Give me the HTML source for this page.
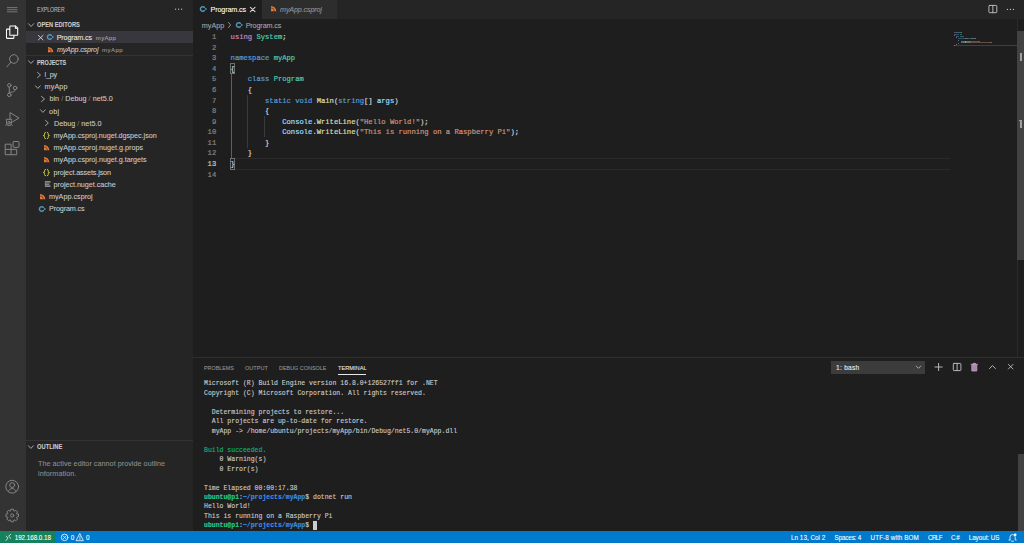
<!DOCTYPE html>
<html><head><meta charset="utf-8">
<style>
*{box-sizing:border-box;margin:0;padding:0}
html,body{width:1024px;height:543px;overflow:hidden;background:#1e1e1e}
body{position:relative;font-family:"Liberation Sans",sans-serif;color:#cccccc}
.a{position:absolute}
.t{position:absolute;white-space:pre;-webkit-text-stroke-width:0.08px}
.m{-webkit-text-stroke-width:0.2px}
</style></head><body>
<div class="a" style="left:0.00px;top:0.00px;width:26.00px;height:531.00px;background:#333333;"></div>
<div class="a" style="left:26.00px;top:0.00px;width:167.00px;height:531.00px;background:#252526;"></div>
<div class="a" style="left:193.00px;top:0.00px;width:831.00px;height:19.00px;background:#252526;"></div>
<div class="a" style="left:193.00px;top:0.00px;width:68.70px;height:19.00px;background:#1e1e1e;"></div>
<div class="a" style="left:261.70px;top:0.00px;width:75.50px;height:19.00px;background:#2d2d2d;"></div>
<svg class="a" style="left:0;top:0" width="26" height="531" viewBox="0 0 26 531" fill="none" stroke-linecap="round" stroke-linejoin="round">
<g stroke="#7f7f7f" stroke-width="0.9"><path d="M7.4 7.6H17M7.4 9.7H17M7.4 11.8H17"/></g>
<g stroke="#ffffff" stroke-width="1.05">
<path d="M9.8 35.3V26.6a0.6 0.6 0 0 1 0.6-0.6H15.6L17.7 28.1V34.7a0.6 0.6 0 0 1-0.6 0.6H10.4a0.6 0.6 0 0 1-0.6-0.6Z"/>
<path d="M15.4 26V28.3H17.7"/>
<path d="M9.8 29.1H7.1a0.6 0.6 0 0 0-0.6 0.6V37.8a0.6 0.6 0 0 0 0.6 0.6H13.3a0.6 0.6 0 0 0 0.6-0.6V35.3"/>
</g>
<g stroke="#858585" stroke-width="1">
<circle cx="13.9" cy="59" r="4.3"/><path d="M10.8 62.2L6.9 66.9"/>
<circle cx="9.3" cy="85.3" r="1.75"/><circle cx="15.1" cy="88" r="1.75"/><circle cx="9.3" cy="94.9" r="1.75"/>
<path d="M9.3 87.05V93.15M15.1 89.75C15.1 91.7 13.2 92.1 9.3 92.4"/>
<path d="M10 118.6V112.6L19 118L12.6 121.8"/>
<path d="M6.2 119.3H11.8M6.6 120.6V123.2A2.4 2.4 0 0 0 11.4 123.2V120.6"/><circle cx="9" cy="122.6" r="1.2"/><path d="M5.6 125.4L6.9 124.4M12.4 125.4L11.1 124.4" stroke-width="0.8"/>
<path d="M5.6 144.2H11.1V154.7H5.6ZM5.6 149.4H16.7V154.7H11.1"/>
<rect x="13.1" y="141.5" width="5.9" height="5.9" rx="0.9"/>
<circle cx="12.2" cy="486.7" r="6.4"/><circle cx="12.2" cy="485.1" r="2.45"/><path d="M8.4 491.6C9.3 489.5 10.7 488.5 12.2 488.5C13.7 488.5 15.1 489.5 16 491.6"/>
<path d="M18.48 514.29 L18.48 516.71 L16.60 517.16 L16.48 517.44 L17.50 519.09 L15.79 520.80 L14.14 519.78 L13.86 519.90 L13.41 521.78 L10.99 521.78 L10.54 519.90 L10.26 519.78 L8.61 520.80 L6.90 519.09 L7.92 517.44 L7.80 517.16 L5.92 516.71 L5.92 514.29 L7.80 513.84 L7.92 513.56 L6.90 511.91 L8.61 510.20 L10.26 511.22 L10.54 511.10 L10.99 509.22 L13.41 509.22 L13.86 511.10 L14.14 511.22 L15.79 510.20 L17.50 511.91 L16.48 513.56 L16.60 513.84Z"/>
<circle cx="12.2" cy="515.5" r="1.6"/>
</g>
</svg>
<div class="t" style="left:36.90px;top:4px;font-family:'Liberation Sans';font-size:6.3px;line-height:12px;font-weight:normal;font-style:normal;color:#bbbbbb;transform-origin:0 0;transform:scaleX(0.8048);">EXPLORER</div>
<svg class="a" style="left:174.00px;top:7.00px;" width="10.00" height="4.00" viewBox="174.00 7.00 10.00 4.00" fill="none" stroke-linecap="round" stroke-linejoin="round"><circle cx="175.6" cy="9.2" r="0.65" fill="#c5c5c5"/><circle cx="178.6" cy="9.2" r="0.65" fill="#c5c5c5"/><circle cx="181.6" cy="9.2" r="0.65" fill="#c5c5c5"/></svg>
<svg class="a" style="left:27.00px;top:21.00px;" width="8.20" height="8.00" viewBox="27.00 21.00 8.20 8.00" fill="none" stroke-linecap="round" stroke-linejoin="round"><path d="M28.50 23.71L31.10 26.50L33.70 23.71" stroke="#c5c5c5" stroke-width="0.8"/></svg>
<div class="t" style="left:36.90px;top:19px;font-family:'Liberation Sans';font-size:6.4px;line-height:12px;font-weight:bold;font-style:normal;color:#cccccc;transform-origin:0 0;transform:scaleX(0.8884);">OPEN EDITORS</div>
<div class="a" style="left:26.00px;top:31.10px;width:167.00px;height:12.20px;background:#37373d;"></div>
<svg class="a" style="left:36.60px;top:33.60px;" width="7.40" height="7.30" viewBox="36.60 33.60 7.40 7.30" fill="none" stroke-linecap="round" stroke-linejoin="round"><path d="M38.00 35.00L42.60 39.50M42.60 35.00L38.00 39.50" stroke="#d0d0d0" stroke-width="1.0"/></svg>
<svg class="a" style="left:45.80px;top:33.20px;" width="8.40" height="8.40" viewBox="45.80 33.20 8.40 8.40" fill="none" stroke-linecap="round" stroke-linejoin="round"><path d="M51.54 36.05A2.30 2.30 0 1 0 51.54 38.35" stroke="#519aba" stroke-width="1.45" stroke-linecap="butt"/><path d="M51.70 37.20H53.50M52.60 36.20V38.20" stroke="#519aba" stroke-width="0.9" stroke-linecap="butt"/></svg>
<div class="t" style="left:56.70px;top:32px;font-family:'Liberation Sans';font-size:7.2px;line-height:12px;font-weight:normal;font-style:normal;color:#e8e8e8;letter-spacing:-0.161px;">Program.cs</div>
<div class="t" style="left:95.80px;top:32px;font-family:'Liberation Sans';font-size:6.0px;line-height:12px;font-weight:normal;font-style:normal;color:#a6a6a6;letter-spacing:0.332px;">myApp</div>
<svg class="a" style="left:46.70px;top:45.70px;" width="7.30" height="7.30" viewBox="46.70 45.70 7.30 7.30" fill="none" stroke-linecap="round" stroke-linejoin="round"><path d="M47.70 52.00V46.70A5.30 5.30 0 0 1 53.00 52.00Z" fill="#e37933"/><path d="M47.70 48.61A3.39 3.39 0 0 1 51.09 52.00" stroke="#252526" stroke-width="0.55" stroke-linecap="butt"/></svg>
<div class="t" style="left:56.90px;top:44px;font-family:'Liberation Sans';font-size:7.2px;line-height:12px;font-weight:normal;font-style:italic;color:#cccccc;letter-spacing:-0.176px;">myApp.csproj</div>
<div class="t" style="left:102.00px;top:44px;font-family:'Liberation Sans';font-size:6.0px;line-height:12px;font-weight:normal;font-style:normal;color:#9d9d9d;letter-spacing:0.482px;">myApp</div>
<div class="a" style="left:26.00px;top:55.00px;width:167.00px;height:1.00px;background:#333333;"></div>
<svg class="a" style="left:27.00px;top:58.40px;" width="8.00" height="8.00" viewBox="27.00 58.40 8.00 8.00" fill="none" stroke-linecap="round" stroke-linejoin="round"><path d="M28.50 61.15L31.00 63.85L33.50 61.15" stroke="#c5c5c5" stroke-width="0.8"/></svg>
<div class="t" style="left:36.80px;top:57px;font-family:'Liberation Sans';font-size:6.4px;line-height:12px;font-weight:bold;font-style:normal;color:#cccccc;transform-origin:0 0;transform:scaleX(0.8477);">PROJECTS</div>
<svg class="a" style="left:35.70px;top:69.60px;" width="5.90" height="10.00" viewBox="35.70 69.60 5.90 10.00" fill="none" stroke-linecap="round" stroke-linejoin="round"><path d="M37.20 72.00L40.20 74.60L37.20 77.20" stroke="#c5c5c5" stroke-width="0.8"/></svg>
<div class="t" style="left:44.60px;top:69px;font-family:'Liberation Sans';font-size:7.2px;line-height:12px;font-weight:normal;font-style:normal;color:#cccccc;letter-spacing:-0.228px;">l_py</div>
<svg class="a" style="left:34.30px;top:82.80px;" width="7.70" height="8.00" viewBox="34.30 82.80 7.70 8.00" fill="none" stroke-linecap="round" stroke-linejoin="round"><path d="M35.80 85.62L38.15 88.18L40.50 85.62" stroke="#c5c5c5" stroke-width="0.8"/></svg>
<div class="t" style="left:44.60px;top:81px;font-family:'Liberation Sans';font-size:7.2px;line-height:12px;font-weight:normal;font-style:normal;color:#cccccc;letter-spacing:0.108px;">myApp</div>
<svg class="a" style="left:40.10px;top:94.00px;" width="5.90" height="10.00" viewBox="40.10 94.00 5.90 10.00" fill="none" stroke-linecap="round" stroke-linejoin="round"><path d="M41.60 96.40L44.60 99.00L41.60 101.60" stroke="#c5c5c5" stroke-width="0.8"/></svg>
<div class="t" style="left:49.40px;top:93px;font-family:'Liberation Sans';font-size:7.2px;line-height:12px;font-weight:normal;font-style:normal;color:#cccccc;letter-spacing:0.035px;">bin <span style="color:#7a7a7a">/</span> Debug <span style="color:#7a7a7a">/</span> net5.0</div>
<svg class="a" style="left:39.20px;top:107.20px;" width="7.80" height="8.00" viewBox="39.20 107.20 7.80 8.00" fill="none" stroke-linecap="round" stroke-linejoin="round"><path d="M40.70 109.99L43.10 112.60L45.50 109.99" stroke="#c5c5c5" stroke-width="0.8"/></svg>
<div class="t" style="left:49.00px;top:106px;font-family:'Liberation Sans';font-size:7.2px;line-height:12px;font-weight:normal;font-style:normal;color:#cccccc;letter-spacing:0.304px;">obj</div>
<svg class="a" style="left:44.30px;top:118.40px;" width="5.70" height="10.00" viewBox="44.30 118.40 5.70 10.00" fill="none" stroke-linecap="round" stroke-linejoin="round"><path d="M45.80 120.80L48.60 123.40L45.80 126.00" stroke="#c5c5c5" stroke-width="0.8"/></svg>
<div class="t" style="left:54.00px;top:118px;font-family:'Liberation Sans';font-size:7.2px;line-height:12px;font-weight:normal;font-style:normal;color:#cccccc;letter-spacing:0.019px;">Debug <span style="color:#7a7a7a">/</span> net5.0</div>
<svg class="a" style="left:42.40px;top:130.90px;" width="8.80" height="9.20" viewBox="42.40 130.90 8.80 9.20" fill="none" stroke-linecap="round" stroke-linejoin="round"><path d="M45.90 132.40Q44.90 132.40 44.90 133.50L44.90 134.80Q44.90 135.50 43.70 135.50Q44.90 135.50 44.90 136.20L44.90 137.50Q44.90 138.60 45.90 138.60 M47.70 132.40Q48.70 132.40 48.70 133.50L48.70 134.80Q48.70 135.50 49.90 135.50Q48.70 135.50 48.70 136.20L48.70 137.50Q48.70 138.60 47.70 138.60" stroke="#cbcb41" stroke-width="1"/></svg>
<div class="t" style="left:53.60px;top:130px;font-family:'Liberation Sans';font-size:7.2px;line-height:12px;font-weight:normal;font-style:normal;color:#cccccc;letter-spacing:-0.027px;">myApp.csproj.nuget.dgspec.json</div>
<svg class="a" style="left:43.40px;top:143.90px;" width="7.30" height="7.30" viewBox="43.40 143.90 7.30 7.30" fill="none" stroke-linecap="round" stroke-linejoin="round"><path d="M44.40 150.20V144.90A5.30 5.30 0 0 1 49.70 150.20Z" fill="#e37933"/><path d="M44.40 146.81A3.39 3.39 0 0 1 47.79 150.20" stroke="#252526" stroke-width="0.55" stroke-linecap="butt"/></svg>
<div class="t" style="left:53.60px;top:142px;font-family:'Liberation Sans';font-size:7.2px;line-height:12px;font-weight:normal;font-style:normal;color:#cccccc;letter-spacing:-0.004px;">myApp.csproj.nuget.g.props</div>
<svg class="a" style="left:43.40px;top:156.10px;" width="7.30" height="7.30" viewBox="43.40 156.10 7.30 7.30" fill="none" stroke-linecap="round" stroke-linejoin="round"><path d="M44.40 162.40V157.10A5.30 5.30 0 0 1 49.70 162.40Z" fill="#e37933"/><path d="M44.40 159.01A3.39 3.39 0 0 1 47.79 162.40" stroke="#252526" stroke-width="0.55" stroke-linecap="butt"/></svg>
<div class="t" style="left:53.60px;top:154px;font-family:'Liberation Sans';font-size:7.2px;line-height:12px;font-weight:normal;font-style:normal;color:#cccccc;letter-spacing:-0.018px;">myApp.csproj.nuget.g.targets</div>
<svg class="a" style="left:42.40px;top:167.50px;" width="8.80" height="9.20" viewBox="42.40 167.50 8.80 9.20" fill="none" stroke-linecap="round" stroke-linejoin="round"><path d="M45.90 169.00Q44.90 169.00 44.90 170.10L44.90 171.40Q44.90 172.10 43.70 172.10Q44.90 172.10 44.90 172.80L44.90 174.10Q44.90 175.20 45.90 175.20 M47.70 169.00Q48.70 169.00 48.70 170.10L48.70 171.40Q48.70 172.10 49.90 172.10Q48.70 172.10 48.70 172.80L48.70 174.10Q48.70 175.20 47.70 175.20" stroke="#cbcb41" stroke-width="1"/></svg>
<div class="t" style="left:53.60px;top:167px;font-family:'Liberation Sans';font-size:7.2px;line-height:12px;font-weight:normal;font-style:normal;color:#cccccc;letter-spacing:-0.118px;">project.assets.json</div>
<svg class="a" style="left:44.00px;top:180.40px;" width="8.00" height="8.00" viewBox="44.00 180.40 8.00 8.00" fill="none" stroke-linecap="round" stroke-linejoin="round"><path d="M45.00 182.30H50.60M45.00 184.45H49.40M45.00 186.60H50.60" stroke="#a8a8a8" stroke-width="1.3" stroke-linecap="butt"/><path d="M45.30 181.70V187.20" stroke="#6a9fb5" stroke-width="0.6" stroke-linecap="butt"/></svg>
<div class="t" style="left:53.60px;top:179px;font-family:'Liberation Sans';font-size:7.2px;line-height:12px;font-weight:normal;font-style:normal;color:#cccccc;letter-spacing:-0.035px;">project.nuget.cache</div>
<svg class="a" style="left:39.20px;top:192.70px;" width="7.30" height="7.30" viewBox="39.20 192.70 7.30 7.30" fill="none" stroke-linecap="round" stroke-linejoin="round"><path d="M40.20 199.00V193.70A5.30 5.30 0 0 1 45.50 199.00Z" fill="#e37933"/><path d="M40.20 195.61A3.39 3.39 0 0 1 43.59 199.00" stroke="#252526" stroke-width="0.55" stroke-linecap="butt"/></svg>
<div class="t" style="left:49.00px;top:191px;font-family:'Liberation Sans';font-size:7.2px;line-height:12px;font-weight:normal;font-style:normal;color:#cccccc;letter-spacing:0.015px;">myApp.csproj</div>
<svg class="a" style="left:37.90px;top:204.70px;" width="8.40" height="8.40" viewBox="37.90 204.70 8.40 8.40" fill="none" stroke-linecap="round" stroke-linejoin="round"><path d="M43.64 207.55A2.30 2.30 0 1 0 43.64 209.85" stroke="#519aba" stroke-width="1.45" stroke-linecap="butt"/><path d="M43.80 208.70H45.60M44.70 207.70V209.70" stroke="#519aba" stroke-width="0.9" stroke-linecap="butt"/></svg>
<div class="t" style="left:49.00px;top:203px;font-family:'Liberation Sans';font-size:7.2px;line-height:12px;font-weight:normal;font-style:normal;color:#cccccc;letter-spacing:-0.127px;">Program.cs</div>
<div class="a" style="left:26.00px;top:440.00px;width:167.00px;height:1.00px;background:#333333;"></div>
<svg class="a" style="left:27.20px;top:442.80px;" width="7.80" height="8.00" viewBox="27.20 442.80 7.80 8.00" fill="none" stroke-linecap="round" stroke-linejoin="round"><path d="M28.70 445.60L31.10 448.21L33.50 445.60" stroke="#c5c5c5" stroke-width="0.8"/></svg>
<div class="t" style="left:37.00px;top:441px;font-family:'Liberation Sans';font-size:6.4px;line-height:12px;font-weight:bold;font-style:normal;color:#cccccc;transform-origin:0 0;transform:scaleX(0.9021);">OUTLINE</div>
<div class="t" style="left:38.00px;top:458px;font-family:'Liberation Sans';font-size:7.2px;line-height:12px;font-weight:normal;font-style:normal;color:#8e8e8e;letter-spacing:0.040px;">The active editor cannot provide outline</div>
<div class="t" style="left:38.00px;top:468px;font-family:'Liberation Sans';font-size:7.2px;line-height:12px;font-weight:normal;font-style:normal;color:#8e8e8e;letter-spacing:0.068px;">information.</div>
<svg class="a" style="left:199.40px;top:5.00px;" width="8.40" height="8.40" viewBox="199.40 5.00 8.40 8.40" fill="none" stroke-linecap="round" stroke-linejoin="round"><path d="M205.14 7.85A2.30 2.30 0 1 0 205.14 10.15" stroke="#519aba" stroke-width="1.45" stroke-linecap="butt"/><path d="M205.30 9.00H207.10M206.20 8.00V10.00" stroke="#519aba" stroke-width="0.9" stroke-linecap="butt"/></svg>
<div class="t" style="left:210.60px;top:4px;font-family:'Liberation Sans';font-size:7.2px;line-height:12px;font-weight:normal;font-style:normal;color:#ffffff;letter-spacing:-0.138px;">Program.cs</div>
<svg class="a" style="left:249.10px;top:6.10px;" width="7.40" height="7.00" viewBox="249.10 6.10 7.40 7.00" fill="none" stroke-linecap="round" stroke-linejoin="round"><path d="M250.50 7.50L255.10 11.70M255.10 7.50L250.50 11.70" stroke="#d8d8d8" stroke-width="1.05"/></svg>
<svg class="a" style="left:269.70px;top:5.10px;" width="7.30" height="7.30" viewBox="269.70 5.10 7.30 7.30" fill="none" stroke-linecap="round" stroke-linejoin="round"><path d="M270.70 11.40V6.10A5.30 5.30 0 0 1 276.00 11.40Z" fill="#e37933"/><path d="M270.70 8.01A3.39 3.39 0 0 1 274.09 11.40" stroke="#252526" stroke-width="0.55" stroke-linecap="butt"/></svg>
<div class="t" style="left:280.10px;top:4px;font-family:'Liberation Sans';font-size:7.2px;line-height:12px;font-weight:normal;font-style:italic;color:#969696;letter-spacing:-0.158px;">myApp.csproj</div>
<svg class="a" style="left:987.00px;top:4.00px;" width="12.00" height="10.00" viewBox="987.00 4.00 12.00 10.00" fill="none" stroke-linecap="round" stroke-linejoin="round"><rect x="988.9" y="5.4" width="7.9" height="7.3" rx="0.8" stroke="#c5c5c5" stroke-width="0.9"/><path d="M992.85 5.4V12.7" stroke="#c5c5c5" stroke-width="0.9"/></svg>
<svg class="a" style="left:1005.00px;top:7.00px;" width="11.00" height="4.00" viewBox="1005.00 7.00 11.00 4.00" fill="none" stroke-linecap="round" stroke-linejoin="round"><circle cx="1007.4" cy="9.4" r="0.65" fill="#c5c5c5"/><circle cx="1010.4" cy="9.4" r="0.65" fill="#c5c5c5"/><circle cx="1013.4" cy="9.4" r="0.65" fill="#c5c5c5"/></svg>
<div class="t" style="left:201.80px;top:20px;font-family:'Liberation Sans';font-size:7.2px;line-height:12px;font-weight:normal;font-style:normal;color:#a9a9a9;letter-spacing:0.008px;">myApp</div>
<svg class="a" style="left:226.70px;top:20.30px;" width="5.00" height="10.00" viewBox="226.70 20.30 5.00 10.00" fill="none" stroke-linecap="round" stroke-linejoin="round"><path d="M228.20 22.70L230.30 25.30L228.20 27.90" stroke="#a9a9a9" stroke-width="0.8"/></svg>
<svg class="a" style="left:234.60px;top:21.20px;" width="8.40" height="8.40" viewBox="234.60 21.20 8.40 8.40" fill="none" stroke-linecap="round" stroke-linejoin="round"><path d="M240.34 24.05A2.30 2.30 0 1 0 240.34 26.35" stroke="#519aba" stroke-width="1.45" stroke-linecap="butt"/><path d="M240.50 25.20H242.30M241.40 24.20V26.20" stroke="#519aba" stroke-width="0.9" stroke-linecap="butt"/></svg>
<div class="t" style="left:245.70px;top:20px;font-family:'Liberation Sans';font-size:7.2px;line-height:12px;font-weight:normal;font-style:normal;color:#a9a9a9;letter-spacing:-0.127px;">Program.cs</div>
<div class="a" style="left:230.00px;top:158.38px;width:719.50px;height:11.19px;background:transparent;border-top:1px solid #2a2a2a;border-bottom:1px solid #2a2a2a;"></div>
<div class="a" style="left:230.50px;top:73.86px;width:0.90px;height:84.42px;background:#5f5f5f;"></div>
<div class="a" style="left:247.40px;top:95.04px;width:0.90px;height:52.95px;background:#3a3a3a;"></div>
<div class="a" style="left:264.30px;top:116.22px;width:0.90px;height:21.18px;background:#3a3a3a;"></div>
<div class="a" style="left:230.20px;top:63.37px;width:5.00px;height:10.59px;background:transparent;border:1px solid #6e6e6e;"></div>
<div class="a" style="left:230.20px;top:158.38px;width:5.00px;height:11.19px;background:transparent;border:1px solid #6e6e6e;"></div>
<div class="t m" style="left:211.89px;top:32px;font-family:'Liberation Mono';font-size:7.18px;line-height:10.59px;font-weight:normal;font-style:normal;color:#858585;">1</div>
<div class="t m" style="left:230.60px;top:32px;font-family:'Liberation Mono';font-size:7.18px;line-height:10.59px;font-weight:normal;font-style:normal;color:#d4d4d4;"><span style="color:#c586c0">using</span><span style="color:#d4d4d4"> </span><span style="color:#4ec9b0">System</span><span style="color:#d4d4d4">;</span></div>
<div class="t m" style="left:211.89px;top:43px;font-family:'Liberation Mono';font-size:7.18px;line-height:10.59px;font-weight:normal;font-style:normal;color:#858585;">2</div>
<div class="t m" style="left:211.89px;top:53px;font-family:'Liberation Mono';font-size:7.18px;line-height:10.59px;font-weight:normal;font-style:normal;color:#858585;">3</div>
<div class="t m" style="left:230.60px;top:53px;font-family:'Liberation Mono';font-size:7.18px;line-height:10.59px;font-weight:normal;font-style:normal;color:#d4d4d4;"><span style="color:#569cd6">namespace</span><span style="color:#d4d4d4"> </span><span style="color:#4ec9b0">myApp</span></div>
<div class="t m" style="left:211.89px;top:64px;font-family:'Liberation Mono';font-size:7.18px;line-height:10.59px;font-weight:normal;font-style:normal;color:#858585;">4</div>
<div class="t m" style="left:230.60px;top:64px;font-family:'Liberation Mono';font-size:7.18px;line-height:10.59px;font-weight:normal;font-style:normal;color:#d4d4d4;"><span style="color:#d4d4d4">{</span></div>
<div class="t m" style="left:211.89px;top:74px;font-family:'Liberation Mono';font-size:7.18px;line-height:10.59px;font-weight:normal;font-style:normal;color:#858585;">5</div>
<div class="t m" style="left:230.60px;top:74px;font-family:'Liberation Mono';font-size:7.18px;line-height:10.59px;font-weight:normal;font-style:normal;color:#d4d4d4;"><span style="color:#d4d4d4">    </span><span style="color:#569cd6">class</span><span style="color:#d4d4d4"> </span><span style="color:#4ec9b0">Program</span></div>
<div class="t m" style="left:211.89px;top:85px;font-family:'Liberation Mono';font-size:7.18px;line-height:10.59px;font-weight:normal;font-style:normal;color:#858585;">6</div>
<div class="t m" style="left:230.60px;top:85px;font-family:'Liberation Mono';font-size:7.18px;line-height:10.59px;font-weight:normal;font-style:normal;color:#d4d4d4;"><span style="color:#d4d4d4">    {</span></div>
<div class="t m" style="left:211.89px;top:96px;font-family:'Liberation Mono';font-size:7.18px;line-height:10.59px;font-weight:normal;font-style:normal;color:#858585;">7</div>
<div class="t m" style="left:230.60px;top:96px;font-family:'Liberation Mono';font-size:7.18px;line-height:10.59px;font-weight:normal;font-style:normal;color:#d4d4d4;"><span style="color:#d4d4d4">        </span><span style="color:#569cd6">static</span><span style="color:#d4d4d4"> </span><span style="color:#569cd6">void</span><span style="color:#d4d4d4"> </span><span style="color:#dcdcaa">Main</span><span style="color:#d4d4d4">(</span><span style="color:#569cd6">string</span><span style="color:#d4d4d4">[] </span><span style="color:#9cdcfe">args</span><span style="color:#d4d4d4">)</span></div>
<div class="t m" style="left:211.89px;top:106px;font-family:'Liberation Mono';font-size:7.18px;line-height:10.59px;font-weight:normal;font-style:normal;color:#858585;">8</div>
<div class="t m" style="left:230.60px;top:106px;font-family:'Liberation Mono';font-size:7.18px;line-height:10.59px;font-weight:normal;font-style:normal;color:#d4d4d4;"><span style="color:#d4d4d4">        {</span></div>
<div class="t m" style="left:211.89px;top:117px;font-family:'Liberation Mono';font-size:7.18px;line-height:10.59px;font-weight:normal;font-style:normal;color:#858585;">9</div>
<div class="t m" style="left:230.60px;top:117px;font-family:'Liberation Mono';font-size:7.18px;line-height:10.59px;font-weight:normal;font-style:normal;color:#d4d4d4;"><span style="color:#d4d4d4">            </span><span style="color:#9cdcfe">Console</span><span style="color:#d4d4d4">.</span><span style="color:#dcdcaa">WriteLine</span><span style="color:#d4d4d4">(</span><span style="color:#ce9178">"Hello World!"</span><span style="color:#d4d4d4">);</span></div>
<div class="t m" style="left:207.59px;top:127px;font-family:'Liberation Mono';font-size:7.18px;line-height:10.59px;font-weight:normal;font-style:normal;color:#858585;">10</div>
<div class="t m" style="left:230.60px;top:127px;font-family:'Liberation Mono';font-size:7.18px;line-height:10.59px;font-weight:normal;font-style:normal;color:#d4d4d4;"><span style="color:#d4d4d4">            </span><span style="color:#9cdcfe">Console</span><span style="color:#d4d4d4">.</span><span style="color:#dcdcaa">WriteLine</span><span style="color:#d4d4d4">(</span><span style="color:#ce9178">"This is running on a Raspberry Pi"</span><span style="color:#d4d4d4">);</span></div>
<div class="t m" style="left:207.59px;top:138px;font-family:'Liberation Mono';font-size:7.18px;line-height:10.59px;font-weight:normal;font-style:normal;color:#858585;">11</div>
<div class="t m" style="left:230.60px;top:138px;font-family:'Liberation Mono';font-size:7.18px;line-height:10.59px;font-weight:normal;font-style:normal;color:#d4d4d4;"><span style="color:#d4d4d4">        }</span></div>
<div class="t m" style="left:207.59px;top:148px;font-family:'Liberation Mono';font-size:7.18px;line-height:10.59px;font-weight:normal;font-style:normal;color:#858585;">12</div>
<div class="t m" style="left:230.60px;top:148px;font-family:'Liberation Mono';font-size:7.18px;line-height:10.59px;font-weight:normal;font-style:normal;color:#d4d4d4;"><span style="color:#d4d4d4">    }</span></div>
<div class="t m" style="left:207.59px;top:159px;font-family:'Liberation Mono';font-size:7.18px;line-height:10.59px;font-weight:normal;font-style:normal;color:#c6c6c6;">13</div>
<div class="t m" style="left:230.60px;top:159px;font-family:'Liberation Mono';font-size:7.18px;line-height:10.59px;font-weight:normal;font-style:normal;color:#d4d4d4;"><span style="color:#d4d4d4">}</span></div>
<div class="t m" style="left:207.59px;top:170px;font-family:'Liberation Mono';font-size:7.18px;line-height:10.59px;font-weight:normal;font-style:normal;color:#858585;">14</div>
<div class="a" style="left:1016.70px;top:19.00px;width:0.80px;height:338.00px;background:#2b2b2b;"></div>
<div class="a" style="left:1016.70px;top:31.00px;width:7.30px;height:229.00px;background:#424242;"></div>
<div class="a" style="left:1019.80px;top:53.00px;width:2.00px;height:8.00px;background:#a0a0a0;"></div>
<div class="a" style="left:1019.30px;top:120.00px;width:3.00px;height:1.20px;background:#a0a0a0;"></div>
<div class="a" style="left:1020.00px;top:120.00px;width:1.60px;height:8.00px;background:#a0a0a0;"></div>
<div class="a" style="left:954.00px;top:44.80px;width:62.70px;height:1.20px;background:#23476b;"></div>
<div class="a" style="left:954.00px;top:31.60px;width:2.80px;height:0.85px;background:#c586c0;opacity:0.42;"></div>
<div class="a" style="left:957.36px;top:31.60px;width:3.36px;height:0.85px;background:#4ec9b0;opacity:0.42;"></div>
<div class="a" style="left:960.72px;top:31.60px;width:0.56px;height:0.85px;background:#d4d4d4;opacity:0.42;"></div>
<div class="a" style="left:954.00px;top:33.86px;width:5.04px;height:0.85px;background:#569cd6;opacity:0.42;"></div>
<div class="a" style="left:959.60px;top:33.86px;width:2.80px;height:0.85px;background:#4ec9b0;opacity:0.42;"></div>
<div class="a" style="left:954.00px;top:34.99px;width:0.56px;height:0.85px;background:#d4d4d4;opacity:0.42;"></div>
<div class="a" style="left:956.24px;top:36.12px;width:2.80px;height:0.85px;background:#569cd6;opacity:0.42;"></div>
<div class="a" style="left:959.60px;top:36.12px;width:3.92px;height:0.85px;background:#4ec9b0;opacity:0.42;"></div>
<div class="a" style="left:956.24px;top:37.25px;width:0.56px;height:0.85px;background:#d4d4d4;opacity:0.42;"></div>
<div class="a" style="left:958.48px;top:38.38px;width:3.36px;height:0.85px;background:#569cd6;opacity:0.42;"></div>
<div class="a" style="left:962.40px;top:38.38px;width:2.24px;height:0.85px;background:#569cd6;opacity:0.42;"></div>
<div class="a" style="left:965.20px;top:38.38px;width:2.24px;height:0.85px;background:#dcdcaa;opacity:0.42;"></div>
<div class="a" style="left:967.44px;top:38.38px;width:0.56px;height:0.85px;background:#d4d4d4;opacity:0.42;"></div>
<div class="a" style="left:968.00px;top:38.38px;width:3.36px;height:0.85px;background:#569cd6;opacity:0.42;"></div>
<div class="a" style="left:971.36px;top:38.38px;width:1.68px;height:0.85px;background:#d4d4d4;opacity:0.42;"></div>
<div class="a" style="left:973.04px;top:38.38px;width:2.24px;height:0.85px;background:#9cdcfe;opacity:0.42;"></div>
<div class="a" style="left:975.28px;top:38.38px;width:0.56px;height:0.85px;background:#d4d4d4;opacity:0.42;"></div>
<div class="a" style="left:958.48px;top:39.51px;width:0.56px;height:0.85px;background:#d4d4d4;opacity:0.42;"></div>
<div class="a" style="left:960.72px;top:40.64px;width:3.92px;height:0.85px;background:#9cdcfe;opacity:0.42;"></div>
<div class="a" style="left:964.64px;top:40.64px;width:0.56px;height:0.85px;background:#d4d4d4;opacity:0.42;"></div>
<div class="a" style="left:965.20px;top:40.64px;width:5.04px;height:0.85px;background:#dcdcaa;opacity:0.42;"></div>
<div class="a" style="left:970.24px;top:40.64px;width:0.56px;height:0.85px;background:#d4d4d4;opacity:0.42;"></div>
<div class="a" style="left:970.80px;top:40.64px;width:7.84px;height:0.85px;background:#ce9178;opacity:0.42;"></div>
<div class="a" style="left:978.64px;top:40.64px;width:1.12px;height:0.85px;background:#d4d4d4;opacity:0.42;"></div>
<div class="a" style="left:960.72px;top:41.77px;width:3.92px;height:0.85px;background:#9cdcfe;opacity:0.42;"></div>
<div class="a" style="left:964.64px;top:41.77px;width:0.56px;height:0.85px;background:#d4d4d4;opacity:0.42;"></div>
<div class="a" style="left:965.20px;top:41.77px;width:5.04px;height:0.85px;background:#dcdcaa;opacity:0.42;"></div>
<div class="a" style="left:970.24px;top:41.77px;width:0.56px;height:0.85px;background:#d4d4d4;opacity:0.42;"></div>
<div class="a" style="left:970.80px;top:41.77px;width:19.60px;height:0.85px;background:#ce9178;opacity:0.42;"></div>
<div class="a" style="left:990.40px;top:41.77px;width:1.12px;height:0.85px;background:#d4d4d4;opacity:0.42;"></div>
<div class="a" style="left:958.48px;top:42.90px;width:0.56px;height:0.85px;background:#d4d4d4;opacity:0.42;"></div>
<div class="a" style="left:956.24px;top:44.03px;width:0.56px;height:0.85px;background:#d4d4d4;opacity:0.42;"></div>
<div class="a" style="left:954.00px;top:45.16px;width:0.56px;height:0.85px;background:#d4d4d4;opacity:0.42;"></div>
<div class="a" style="left:193.00px;top:357.00px;width:831.00px;height:1.00px;background:#2f2f2f;"></div>
<div class="t" style="left:203.90px;top:362px;font-family:'Liberation Sans';font-size:6.1px;line-height:12px;font-weight:normal;font-style:normal;color:#969696;transform-origin:0 0;transform:scaleX(0.8829);">PROBLEMS</div>
<div class="t" style="left:244.90px;top:362px;font-family:'Liberation Sans';font-size:6.1px;line-height:12px;font-weight:normal;font-style:normal;color:#969696;transform-origin:0 0;transform:scaleX(0.9102);">OUTPUT</div>
<div class="t" style="left:278.60px;top:362px;font-family:'Liberation Sans';font-size:6.1px;line-height:12px;font-weight:normal;font-style:normal;color:#969696;transform-origin:0 0;transform:scaleX(0.8916);">DEBUG CONSOLE</div>
<div class="t" style="left:337.50px;top:362px;font-family:'Liberation Sans';font-size:6.1px;line-height:12px;font-weight:normal;font-style:normal;color:#e7e7e7;transform-origin:0 0;transform:scaleX(0.9282);">TERMINAL</div>
<div class="a" style="left:337.50px;top:374.00px;width:28.60px;height:1.00px;background:#e7e7e7;"></div>
<div class="a" style="left:830.80px;top:360.90px;width:94.40px;height:12.70px;background:#3c3c3c;"></div>
<div class="t" style="left:836.10px;top:362px;font-family:'Liberation Sans';font-size:6.6px;line-height:12px;font-weight:normal;font-style:normal;color:#f0f0f0;letter-spacing:0.245px;">1: bash</div>
<svg class="a" style="left:914.00px;top:364.00px;" width="9.00" height="6.00" viewBox="914.00 364.00 9.00 6.00" fill="none" stroke-linecap="round" stroke-linejoin="round"><path d="M916.2 366L918.5 368.3L920.8 366" stroke="#c5c5c5" stroke-width="0.8"/></svg>
<svg class="a" style="left:933.00px;top:361.00px;" width="11.00" height="12.00" viewBox="933.00 361.00 11.00 12.00" fill="none" stroke-linecap="round" stroke-linejoin="round"><path d="M938.6 363.4V370.6M935 367H942.2" stroke="#c5c5c5" stroke-width="0.9"/></svg>
<svg class="a" style="left:951.00px;top:362.00px;" width="12.00" height="10.00" viewBox="951.00 362.00 12.00 10.00" fill="none" stroke-linecap="round" stroke-linejoin="round"><rect x="953.3" y="363.4" width="7.6" height="7.2" rx="0.8" stroke="#c5c5c5" stroke-width="0.9"/><path d="M957.1 363.4V370.6" stroke="#c5c5c5" stroke-width="0.9"/></svg>
<svg class="a" style="left:969.00px;top:361.00px;" width="10.00" height="12.00" viewBox="969.00 361.00 10.00 12.00" fill="none" stroke-linecap="round" stroke-linejoin="round"><path d="M971 364.3H977.6M973.2 364.3V363.3H975.4V364.3M971.8 365V371H976.8V365Z" stroke="#c5a0c5" stroke-width="0.8" fill="#a889a8"/></svg>
<svg class="a" style="left:988.00px;top:363.00px;" width="9.00" height="7.00" viewBox="988.00 363.00 9.00 7.00" fill="none" stroke-linecap="round" stroke-linejoin="round"><path d="M989.4 368.6L992.45 365.6L995.5 368.6" stroke="#c5c5c5" stroke-width="0.9"/></svg>
<svg class="a" style="left:1006.80px;top:363.20px;" width="7.40" height="7.40" viewBox="1006.80 363.20 7.40 7.40" fill="none" stroke-linecap="round" stroke-linejoin="round"><path d="M1008.20 364.60L1012.80 369.20M1012.80 364.60L1008.20 369.20" stroke="#c5c5c5" stroke-width="0.85"/></svg>
<div class="t m" style="left:203.90px;top:379px;font-family:'Liberation Mono';font-size:6.9px;line-height:9.48px;font-weight:normal;font-style:normal;color:#cccccc;transform-origin:0 0;transform:scaleX(0.9415);-webkit-text-stroke-width:0.12px;"><span style="color:#cccccc">Microsoft (R) Build Engine version 16.8.0+126527ff1 for .NET</span></div>
<div class="t m" style="left:203.90px;top:389px;font-family:'Liberation Mono';font-size:6.9px;line-height:9.48px;font-weight:normal;font-style:normal;color:#cccccc;transform-origin:0 0;transform:scaleX(0.9415);-webkit-text-stroke-width:0.12px;"><span style="color:#cccccc">Copyright (C) Microsoft Corporation. All rights reserved.</span></div>
<div class="t m" style="left:203.90px;top:408px;font-family:'Liberation Mono';font-size:6.9px;line-height:9.48px;font-weight:normal;font-style:normal;color:#cccccc;transform-origin:0 0;transform:scaleX(0.9415);-webkit-text-stroke-width:0.12px;"><span style="color:#cccccc">  Determining projects to restore...</span></div>
<div class="t m" style="left:203.90px;top:417px;font-family:'Liberation Mono';font-size:6.9px;line-height:9.48px;font-weight:normal;font-style:normal;color:#cccccc;transform-origin:0 0;transform:scaleX(0.9415);-webkit-text-stroke-width:0.12px;"><span style="color:#cccccc">  All projects are up-to-date for restore.</span></div>
<div class="t m" style="left:203.90px;top:427px;font-family:'Liberation Mono';font-size:6.9px;line-height:9.48px;font-weight:normal;font-style:normal;color:#cccccc;transform-origin:0 0;transform:scaleX(0.9415);-webkit-text-stroke-width:0.12px;"><span style="color:#cccccc">  myApp -&gt; /home/ubuntu/projects/myApp/bin/Debug/net5.0/myApp.dll</span></div>
<div class="t m" style="left:203.90px;top:446px;font-family:'Liberation Mono';font-size:6.9px;line-height:9.48px;font-weight:normal;font-style:normal;color:#cccccc;transform-origin:0 0;transform:scaleX(0.9415);-webkit-text-stroke-width:0.12px;"><span style="color:#0dbc79">Build succeeded.</span></div>
<div class="t m" style="left:203.90px;top:455px;font-family:'Liberation Mono';font-size:6.9px;line-height:9.48px;font-weight:normal;font-style:normal;color:#cccccc;transform-origin:0 0;transform:scaleX(0.9415);-webkit-text-stroke-width:0.12px;"><span style="color:#cccccc">    0 Warning(s)</span></div>
<div class="t m" style="left:203.90px;top:465px;font-family:'Liberation Mono';font-size:6.9px;line-height:9.48px;font-weight:normal;font-style:normal;color:#cccccc;transform-origin:0 0;transform:scaleX(0.9415);-webkit-text-stroke-width:0.12px;"><span style="color:#cccccc">    0 Error(s)</span></div>
<div class="t m" style="left:203.90px;top:484px;font-family:'Liberation Mono';font-size:6.9px;line-height:9.48px;font-weight:normal;font-style:normal;color:#cccccc;transform-origin:0 0;transform:scaleX(0.9415);-webkit-text-stroke-width:0.12px;"><span style="color:#cccccc">Time Elapsed 00:00:17.38</span></div>
<div class="t m" style="left:203.90px;top:493px;font-family:'Liberation Mono';font-size:6.9px;line-height:9.48px;font-weight:normal;font-style:normal;color:#cccccc;transform-origin:0 0;transform:scaleX(0.9415);-webkit-text-stroke-width:0.12px;"><span style="color:#23d18b;font-weight:bold">ubuntu@pi</span><span style="color:#cccccc">:</span><span style="color:#3b8eea;font-weight:bold">~/projects/myApp</span><span style="color:#cccccc">$ dotnet run</span></div>
<div class="t m" style="left:203.90px;top:502px;font-family:'Liberation Mono';font-size:6.9px;line-height:9.48px;font-weight:normal;font-style:normal;color:#cccccc;transform-origin:0 0;transform:scaleX(0.9415);-webkit-text-stroke-width:0.12px;"><span style="color:#cccccc">Hello World!</span></div>
<div class="t m" style="left:203.90px;top:512px;font-family:'Liberation Mono';font-size:6.9px;line-height:9.48px;font-weight:normal;font-style:normal;color:#cccccc;transform-origin:0 0;transform:scaleX(0.9415);-webkit-text-stroke-width:0.12px;"><span style="color:#cccccc">This is running on a Raspberry Pi</span></div>
<div class="t m" style="left:203.90px;top:521px;font-family:'Liberation Mono';font-size:6.9px;line-height:9.48px;font-weight:normal;font-style:normal;color:#cccccc;transform-origin:0 0;transform:scaleX(0.9415);-webkit-text-stroke-width:0.12px;"><span style="color:#23d18b;font-weight:bold">ubuntu@pi</span><span style="color:#cccccc">:</span><span style="color:#3b8eea;font-weight:bold">~/projects/myApp</span><span style="color:#cccccc">$ </span></div>
<div class="a" style="left:312.70px;top:521.30px;width:4.10px;height:8.50px;background:#cccccc;"></div>
<div class="a" style="left:1018.40px;top:454.00px;width:5.60px;height:77.00px;background:#424242;"></div>
<div class="a" style="left:0.00px;top:531.00px;width:1024.00px;height:12.00px;background:#007acc;"></div>
<div class="a" style="left:0.00px;top:531.00px;width:56.00px;height:12.00px;background:#16825d;"></div>
<svg class="a" style="left:4.00px;top:532.00px;" width="9.00" height="10.00" viewBox="4.00 532.00 9.00 10.00" fill="none" stroke-linecap="round" stroke-linejoin="round"><path d="M6.1 536.3L8 538.1L6 540.5M10.6 534.3L8.6 536.3L10.8 538.3" stroke="#e8f4ee" stroke-width="0.85"/></svg>
<div class="t" style="left:14.70px;top:532px;font-family:'Liberation Sans';font-size:6.3px;line-height:12px;font-weight:normal;font-style:normal;color:#ffffff;letter-spacing:-0.042px;">192.168.0.18</div>
<svg class="a" style="left:60.00px;top:533.00px;" width="9.00" height="9.00" viewBox="60.00 533.00 9.00 9.00" fill="none" stroke-linecap="round" stroke-linejoin="round"><circle cx="64.6" cy="537.4" r="3.3" stroke="#ffffff" stroke-width="0.8"/><path d="M63.2 536L66 538.8M66 536L63.2 538.8" stroke="#ffffff" stroke-width="0.7"/></svg>
<div class="t" style="left:70.70px;top:532px;font-family:'Liberation Sans';font-size:6.3px;line-height:12px;font-weight:normal;font-style:normal;color:#ffffff;">0</div>
<svg class="a" style="left:75.00px;top:532.00px;" width="10.00" height="10.00" viewBox="75.00 532.00 10.00 10.00" fill="none" stroke-linecap="round" stroke-linejoin="round"><path d="M79.95 533.8L83.4 540.7H76.5Z" stroke="#ffffff" stroke-width="0.8"/><path d="M79.95 536.2V538.6M79.95 539.4V539.7" stroke="#ffffff" stroke-width="0.7"/></svg>
<div class="t" style="left:86.00px;top:532px;font-family:'Liberation Sans';font-size:6.3px;line-height:12px;font-weight:normal;font-style:normal;color:#ffffff;">0</div>
<div class="t" style="left:791.00px;top:532px;font-family:'Liberation Sans';font-size:6.3px;line-height:12px;font-weight:normal;font-style:normal;color:#ffffff;letter-spacing:0.031px;">Ln 13, Col 2</div>
<div class="t" style="left:834.60px;top:532px;font-family:'Liberation Sans';font-size:6.3px;line-height:12px;font-weight:normal;font-style:normal;color:#ffffff;letter-spacing:-0.163px;">Spaces: 4</div>
<div class="t" style="left:870.60px;top:532px;font-family:'Liberation Sans';font-size:6.3px;line-height:12px;font-weight:normal;font-style:normal;color:#ffffff;letter-spacing:0.094px;">UTF-8 with BOM</div>
<div class="t" style="left:928.00px;top:532px;font-family:'Liberation Sans';font-size:6.3px;line-height:12px;font-weight:normal;font-style:normal;color:#ffffff;letter-spacing:-0.648px;">CRLF</div>
<div class="t" style="left:951.10px;top:532px;font-family:'Liberation Sans';font-size:6.3px;line-height:12px;font-weight:normal;font-style:normal;color:#ffffff;letter-spacing:0.651px;">C#</div>
<div class="t" style="left:968.70px;top:532px;font-family:'Liberation Sans';font-size:6.3px;line-height:12px;font-weight:normal;font-style:normal;color:#ffffff;letter-spacing:-0.039px;">Layout: US</div>
<svg class="a" style="left:1007.00px;top:532.00px;" width="11.00" height="10.00" viewBox="1007.00 532.00 11.00 10.00" fill="none" stroke-linecap="round" stroke-linejoin="round"><path d="M1010 540V537.2a2.6 2.6 0 0 1 5.2 0V540H1016.2M1009 540H1010M1011.6 541.2H1013.6" stroke="#ffffff" stroke-width="0.8"/><circle cx="1015.2" cy="534.8" r="1.3" fill="#ffffff"/></svg>
</body></html>
